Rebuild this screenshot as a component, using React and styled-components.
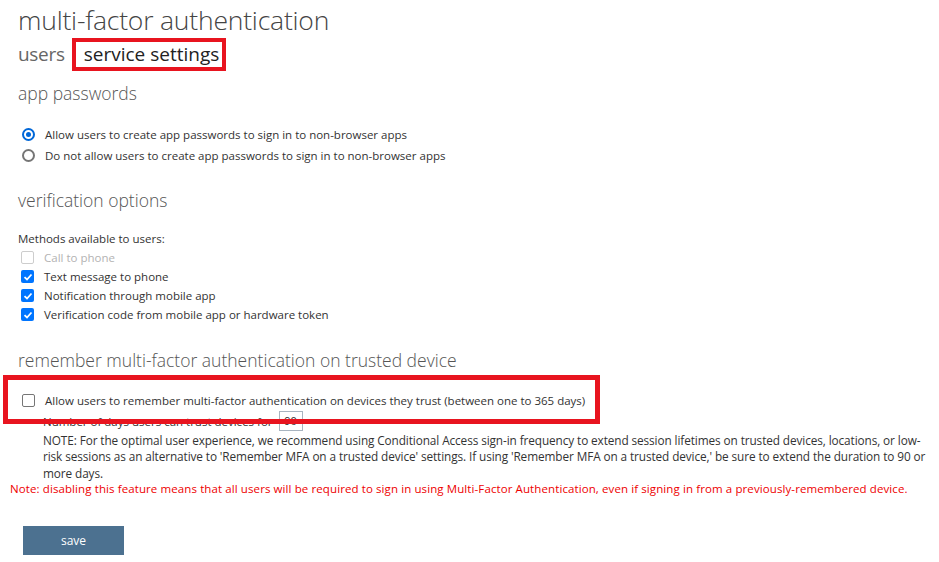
import React from "react"
import styled, { createGlobalStyle } from "styled-components"

const GlobalStyle = createGlobalStyle`
  body {
    margin: 0;
    background: #fff;
    font-family: "Open Sans", "Noto Sans", sans-serif;
    color: #333;
  }
`

const Page = styled.div`
  padding: 0 18px;
  width: 939px;
  height: 562px;
  box-sizing: border-box;
  overflow: hidden;
`

const Title = styled.h1`
  margin: 0;
  padding-top: 2px;
  font-weight: 300;
  font-size: 26.5px;
  line-height: 36px;
  color: #444;
  letter-spacing: -0.2px;
`

const Tabs = styled.div`
  display: flex;
  align-items: center;
  gap: 7px;
  height: 34px;
  margin-top: -1px;
`

const Tab = styled.div`
  font-size: 19px;
  line-height: 25px;
  letter-spacing: ${(p) => (p.active ? "0" : "-0.3px")};
  color: ${(p) => (p.active ? "#222" : "#666")};
  ${(p) =>
    p.active &&
    `
    border: 4px solid #e8141f;
    padding: 0 3px 0 8px;
    height: 25px;
  `}
`

const SectionTitle = styled.h2`
  margin: 0;
  font-weight: 300;
  font-size: 17.5px;
  line-height: 24px;
  color: #555;
  margin-top: ${(p) => p.top}px;
`

const Options = styled.div`
  margin-top: ${(p) => p.top}px;
`

const Option = styled.label`
  display: flex;
  align-items: center;
  height: ${(p) => p.h || 19}px;
  font-size: 11.5px;
  color: ${(p) => (p.disabled ? "#b3b3b3" : "#333")};
  padding-left: ${(p) => p.indent || 3}px;
  gap: 10px;
`

const Radio = styled.span`
  width: 13px;
  height: 13px;
  box-sizing: border-box;
  border-radius: 50%;
  border: 2px solid ${(p) => (p.checked ? "#0067d8" : "#767676")};
  display: inline-flex;
  align-items: center;
  justify-content: center;
  &::after {
    content: "";
    width: 5px;
    height: 5px;
    border-radius: 50%;
    background: ${(p) => (p.checked ? "#0067d8" : "transparent")};
  }
`

const Box = styled.span`
  width: 13px;
  height: 13px;
  box-sizing: border-box;
  border-radius: 2px;
  display: inline-flex;
  align-items: center;
  justify-content: center;
  background: ${(p) => (p.checked ? "#0075ff" : "#fff")};
  border: ${(p) =>
    p.checked ? "none" : `1.5px solid ${p.disabled ? "#cdcdcd" : "#767676"}`};
`

const Label = styled.div`
  font-size: 11.5px;
  line-height: 18px;
  color: #333;
  margin-top: ${(p) => p.top || 0}px;
`

const Remember = styled.div`
  position: relative;
  margin-top: 18px;
`

const Annotation = styled.div`
  position: absolute;
  left: -15px;
  top: -15px;
  width: 597px;
  height: 49px;
  box-sizing: border-box;
  border: 5px solid #e8141f;
  pointer-events: none;
`

const DaysRow = styled.div`
  display: flex;
  align-items: center;
  gap: 6px;
  height: 20px;
  padding-left: 25px;
  font-size: 11.5px;
  color: #333;
`

const DaysInput = styled.span`
  width: 22px;
  height: 18px;
  border: 1px solid #a8b4c0;
  font-size: 11px;
  text-align: center;
  line-height: 18px;
`

const Note = styled.p`
  margin: 1px -6px 0 0;
  padding-left: 25px;
  font-size: 11.8px;
  line-height: 16.3px;
  color: #333;
  letter-spacing: -0.1px;
`

const Warning = styled.p`
  margin: 0 0 0 -8px;
  font-size: 11.5px;
  line-height: 16px;
  color: #e00;
  letter-spacing: 0.1px;
  white-space: nowrap;
`

const SaveButton = styled.button`
  margin-top: 29px;
  margin-left: 5px;
  width: 101px;
  height: 29px;
  border: none;
  background: #4c7190;
  color: #fff;
  font-family: inherit;
  font-size: 12px;
`

const Check = () => (
  <svg width="10" height="10" viewBox="0 0 10 10">
    <path d="M1.5 5.2 L4 7.5 L8.5 2.5" stroke="#fff" strokeWidth="1.8" fill="none" />
  </svg>
)

const methods = [
  { text: "Call to phone", checked: false, disabled: true },
  { text: "Text message to phone", checked: true },
  { text: "Notification through mobile app", checked: true },
  { text: "Verification code from mobile app or hardware token", checked: true },
]

export default function App() {
  return (
    <Page>
      <GlobalStyle />
      <Title>multi-factor authentication</Title>
      <Tabs>
        <Tab>users</Tab>
        <Tab active>service settings</Tab>
      </Tabs>

      <SectionTitle top={10}>app passwords</SectionTitle>
      <Options top={19}>
        <Option h={21} indent={4}>
          <Radio checked />
          Allow users to create app passwords to sign in to non-browser apps
        </Option>
        <Option h={21} indent={4}>
          <Radio />
          Do not allow users to create app passwords to sign in to non-browser apps
        </Option>
      </Options>

      <SectionTitle top={22}>verification options</SectionTitle>
      <Label top={18}>Methods available to users:</Label>
      {methods.map((m) => (
        <Option key={m.text} disabled={m.disabled}>
          <Box checked={m.checked} disabled={m.disabled}>
            {m.checked && <Check />}
          </Box>
          {m.text}
        </Option>
      ))}

      <SectionTitle top={24}>remember multi-factor authentication on trusted device</SectionTitle>
      <Remember>
        <Option h={21} indent={4}>
          <Box />
          Allow users to remember multi-factor authentication on devices they trust (between one to 365 days)
        </Option>
        <DaysRow>
          Number of days users can trust devices for
          <DaysInput>90</DaysInput>
        </DaysRow>
        <Annotation />
        <Note>
          NOTE: For the optimal user experience, we recommend using Conditional Access sign-in frequency to extend
          session lifetimes on trusted devices, locations, or low-risk sessions as an alternative to 'Remember MFA on a
          trusted device' settings. If using 'Remember MFA on a trusted device,' be sure to extend the duration to 90 or
          more days.
        </Note>
        <Warning>
          Note: disabling this feature means that all users will be required to sign in using Multi-Factor
          Authentication, even if signing in from a previously-remembered device.
        </Warning>
      </Remember>
      <SaveButton>save</SaveButton>
    </Page>
  )
}
